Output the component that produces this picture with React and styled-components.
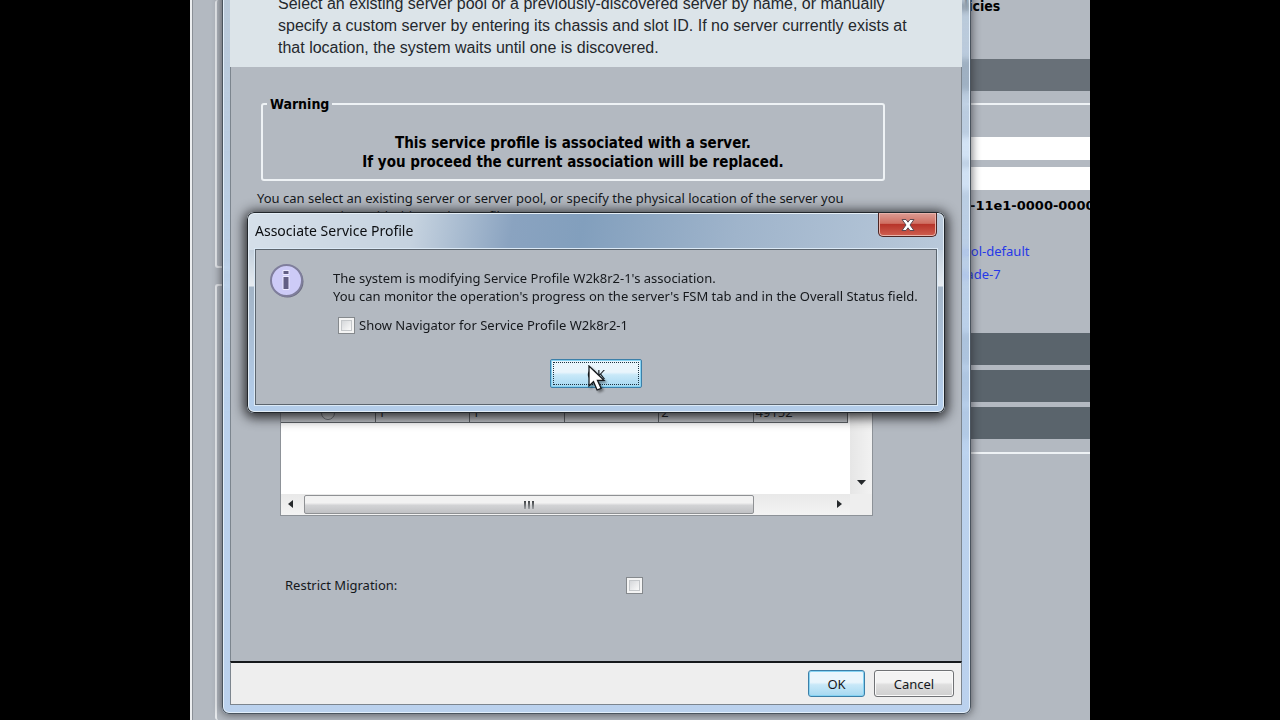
import React from "react";

import styled, { createGlobalStyle } from "styled-components";

const GlobalStyle = createGlobalStyle`
    * {
        box-sizing: border-box;
    }

    body {
        margin: 0;
        background: #000;
        color: #15181c;
        font-family: "Noto Sans", "Open Sans", sans-serif;
        font-size: 13px;
        line-height: 18px;
    }
`;

const Desktop = styled.main`
    position: relative;
    display: flex;
    height: 100vh;
    margin: 0 190px;
    overflow: hidden;
    background: #b3b9c1;
    border-left: 2px solid #eceef0;
`;

const TreePane = styled.div`
    display: flex;
    flex-direction: column;
    flex: 0 0 50px;
    gap: 16px;
    padding-left: 22px;
    border-left: 1px solid #8b9097;
`;

const TreeGroup = styled.div`
    flex: ${(props) => (props.$fill ? "1" : "0 0 268px")};
    border: 2px solid #e8ebee;
    border-radius: 3px;
    border-right: 0;
    border-top-width: ${(props) => (props.$fill ? "2px" : "0")};
    border-bottom-width: ${(props) => (props.$fill ? "0" : "2px")};
`;

const DetailPane = styled.div`
    display: flex;
    flex-direction: column;
    flex: 1;
    padding-left: 690px;
`;

const TabName = styled.div`
    height: 59px;
    padding-left: 14px;
    font-family: "DejaVu Sans Condensed", sans-serif;
    font-size: 14px;
    font-weight: bold;
    line-height: 13px;
    color: #000;
`;

const SectionBar = styled.div`
    height: 32px;
    margin-bottom: ${(props) => (props.$last ? "0" : "5px")};
    background: ${(props) => props.$tone || "#5a646c"};
`;

const Properties = styled.div`
    display: flex;
    flex-direction: column;
    gap: 7px;
    height: 230px;
    margin-top: 12px;
    padding-top: 32px;
    border-top: 2px solid #eef2f5;
`;

const Field = styled.input`
    display: block;
    width: 100%;
    height: 23px;
    padding: 0;
    border: 0;
    background: #fff;
`;

const Uuid = styled.div`
    padding-left: 38px;
    font-family: "DejaVu Sans", sans-serif;
    font-weight: bold;
    white-space: nowrap;
    color: #000;
`;

const Links = styled.div`
    display: flex;
    flex-direction: column;
    align-items: flex-start;
    gap: 5px;
    padding: 20px 0 0 23px;
`;

const Link = styled.a`
    text-decoration: none;
    color: #2638e8;
`;

const Divider = styled.div`
    margin-top: 13px;
    border-top: 2px solid #eef2f5;
`;

const Window = styled.section`
    position: absolute;
    top: -24px;
    bottom: 6px;
    left: 30px;
    right: 119px;
    display: flex;
    flex-direction: column;
    padding: 8px 9px 9px 8px;
    border-radius: 7px;
    background: linear-gradient(
        rgba(193, 215, 236, 0.55),
        rgba(187, 212, 242, 0.9) 60%
    );
    backdrop-filter: blur(3px);
    box-shadow:
        inset 0 0 0 1px #4a545e,
        inset 0 0 0 2px #e2eefa,
        0 0 9px 1px rgba(40, 40, 44, 0.65);
`;

const Header = styled.header`
    padding: 9px 20px 8px 48px;
    background: #dce4e9;
    font-family: "Liberation Sans", Arial, sans-serif;
    font-size: 16px;
    line-height: 22px;
    white-space: nowrap;
    color: #24282d;
`;

const Body = styled.div`
    display: flex;
    flex-direction: column;
    flex: 1;
    padding: 28px 77px 0 27px;
    background: #b3b9c1;
    box-shadow: inset 1px 0 #7c858e, inset -1px 0 #7c858e;
`;

const Warning = styled.fieldset`
    margin: 0 0 8px 4px;
    padding: 21px 0 7px;
    border: 2px solid #eef2f5;
    border-radius: 3px;
    font-family: "DejaVu Sans Condensed", sans-serif;
    font-weight: bold;
    color: #000;
`;

const WarningTitle = styled.legend`
    margin-left: 4px;
    padding: 0 3px;
    font-size: 14px;
`;

const WarningText = styled.p`
    margin: 0;
    font-size: 15px;
    line-height: 19px;
    text-align: center;
`;

const Hint = styled.p`
    margin: 0;
    white-space: nowrap;
`;

const ServerList = styled.div`
    display: grid;
    grid-template-columns: 1fr 22px;
    grid-template-rows: 92px 21px;
    width: 593px;
    margin: 176px 0 0 23px;
    border: 1px solid #8d9298;
    background: #eee;
`;

const TableArea = styled.div`
    background: #fff;
`;

const Table = styled.table`
    width: 567px;
    border-collapse: collapse;
    table-layout: fixed;
    background: #c8cbcf;
`;

const Cell = styled.td`
    height: 20px;
    padding: 0 2px;
    border-right: 1px solid #5e6266;
    border-bottom: 1px solid #5e6266;
    line-height: 18px;
    text-align: ${(props) => (props.$center ? "center" : "left")};
`;

const Radio = styled.input`
    appearance: none;
    width: 14px;
    height: 14px;
    margin: 0;
    border: 1px solid #70757a;
    border-radius: 50%;
    background: #d5d7d9;
    vertical-align: middle;
`;

const VerticalTrack = styled.div`
    display: flex;
    align-items: flex-end;
    justify-content: center;
    padding-bottom: 7px;
    background: linear-gradient(90deg, #e6e6e6, #f2f2f2);
`;

const HorizontalTrack = styled.div`
    display: flex;
    align-items: center;
    padding: 0 6px;
    background: linear-gradient(#e9e9e9, #f3f3f3);
`;

const Thumb = styled.div`
    display: flex;
    align-items: center;
    justify-content: center;
    gap: 2px;
    width: 450px;
    height: 19px;
    margin: 0 auto 0 8px;
    border: 1px solid #8f9194;
    border-radius: 2px;
    background: linear-gradient(#f2f2f2 40%, #d2d3d5 55%, #c0c1c4);
`;

const Grip = styled.span`
    width: 2px;
    height: 8px;
    background: linear-gradient(#3d4043, #9fa2a5);
`;

const Migration = styled.label`
    display: flex;
    align-items: center;
    margin: 60px 0 0 28px;
`;

const MigrationText = styled.span`
    width: 341px;
`;

const CheckBox = styled.input`
    appearance: none;
    flex: none;
    width: 17px;
    height: 17px;
    margin: 0;
    border: 1px solid #85898d;
    background: linear-gradient(135deg, #c9ccd0, #fafafa 80%);
    box-shadow: inset 0 0 0 2px #f4f4f4, inset 0 0 0 3px #c4c7ca;
`;

const Footer = styled.footer`
    display: flex;
    align-items: center;
    justify-content: flex-end;
    gap: 9px;
    height: 44px;
    padding: 0 7px;
    border: 1px solid #7c858e;
    border-top: 2px solid #15181b;
    background: #eee;
`;

const Button = styled.button`
    width: ${(props) => props.$width};
    height: 27px;
    padding: 0;
    border: 1px solid ${(props) => (props.$primary ? "#3c7fa8" : "#707275")};
    border-radius: 3px;
    background: ${(props) =>
        props.$primary
            ? "linear-gradient(#e9f5fc 45%, #c8e8f8 55%, #a6d8f1)"
            : "linear-gradient(#f3f3f3 45%, #dedede 55%, #cfcfcf)"};
    box-shadow: inset 0 0 0 1px
        ${(props) => (props.$primary ? "#86d3f3" : "#fafafa")};
    font-family: inherit;
    font-size: 13px;
    color: #15181c;
`;

const Dialog = styled.section`
    position: absolute;
    top: 212px;
    left: 55px;
    right: 145px;
    display: flex;
    flex-direction: column;
    padding: 0 8px 8px;
    border-radius: 7px;
    background:
        linear-gradient(
                100deg,
                #d6e0ea,
                #c5d2df 24%,
                #8aa3c0 38%,
                #829fbd 48%,
                #9fb4cb 70%,
                #b9c9da
            )
            top / 100% 38px no-repeat,
        linear-gradient(#c3d0dd 38px, #e6ebf0 74px, #a3b4c6 75px, #b4cdea 190px);
    box-shadow:
        inset 0 0 0 1px #22272c,
        inset 0 0 0 2px #e4eef6,
        0 2px 12px 3px rgba(20, 20, 22, 0.85);
`;

const TitleBar = styled.header`
    display: flex;
    align-items: center;
    justify-content: space-between;
    height: 37px;
`;

const Title = styled.h1`
    margin: 0;
    font-size: 14px;
    font-weight: normal;
    line-height: 18px;
    color: #0c0e11;
`;

const CloseButton = styled.button`
    display: flex;
    align-items: center;
    align-self: flex-start;
    justify-content: center;
    width: 59px;
    height: 24px;
    margin-top: 1px;
    padding: 0;
    border: 1px solid #4d2523;
    border-top: 0;
    border-radius: 0 0 5px 5px;
    background: linear-gradient(#dc9d94, #cf6f62 45%, #b7352a 50%, #cf5f50);
    box-shadow: inset 0 0 0 1px #e9b3aa;
`;

const DialogBody = styled.div`
    display: flex;
    flex-direction: column;
    justify-content: space-between;
    height: 156px;
    padding: 13px 13px 16px;
    border: 1px solid #5c656e;
    background: #b3b9c1;
    box-shadow: 0 0 0 1px #dbe9f6;
`;

const MessageRow = styled.div`
    display: flex;
    align-items: flex-start;
    gap: 28px;
`;

const Message = styled.div`
    padding-top: 6px;
    white-space: nowrap;
`;

const NavigatorOption = styled.label`
    display: flex;
    align-items: center;
    gap: 4px;
    margin: 11px 0 0 5px;
`;

const DialogActions = styled.div`
    display: flex;
    justify-content: center;
`;

const FocusButton = styled(Button)`
    height: 29px;
    border-radius: 2px;
    outline: 1px dotted #1b3340;
    outline-offset: -4px;
`;

const Pointer = styled.svg`
    position: absolute;
    top: 365px;
    left: 396px;
    filter: drop-shadow(2px 2px 1px rgba(0, 0, 0, 0.4));
`;

const Arrow = ({ direction }) => {
    const points = {
        left: "6,0 6,8 1,4",
        right: "2,0 2,8 7,4",
        down: "0,2 9,2 4.5,7",
    };

    return (
        <svg width="9" height="9" viewBox="0 0 9 9" aria-hidden="true">
            <polygon points={points[direction]} fill="#26292c" />
        </svg>
    );
};

const InfoIcon = () => (
    <svg width="36" height="36" viewBox="0 0 36 36" aria-hidden="true">
        <circle cx="18.500" cy="18.500" r="16" fill="#6c6c80" />
        <circle cx="17.500" cy="17.500" r="15.500" fill="#cdcbf7" stroke="#7f7e9c" strokeWidth="2" />
        <path
            d="M14 7.500h6v4h-6zM14 13.500h6v13h-6z"
            fill="#625f85"
            stroke="#ebe9ff"
            strokeWidth="1"
        />
    </svg>
);

const CloseIcon = () => (
    <svg width="16" height="14" viewBox="0 0 16 14" aria-hidden="true">
        <path
            d="M2 1.500h4l2 2.700 2-2.700h4l-4 5.500 4 5.500h-4l-2-2.700-2 2.700h-4l4-5.500z"
            fill="#fff"
            stroke="#5c4a52"
            strokeWidth="1"
        />
    </svg>
);

const ServerWindow = () => (
    <Window>
        <Header>
            Select an existing server pool or a previously-discovered server by
            name, or manually
            <br />
            specify a custom server by entering its chassis and slot ID. If no
            server currently exists at
            <br />
            that location, the system waits until one is discovered.
        </Header>
        <Body>
            <Warning>
                <WarningTitle>Warning</WarningTitle>
                <WarningText>
                    This service profile is associated with a server.
                    <br />
                    If you proceed the current association will be replaced.
                </WarningText>
            </Warning>
            <Hint>
                You can select an existing server or server pool, or specify the
                physical location of the server you
                <br />
                want to associate with this service profile.
            </Hint>
            <ServerList>
                <TableArea>
                    <Table>
                        <tbody>
                            <tr>
                                <Cell $center>
                                    <Radio type="radio" aria-label="Select server" />
                                </Cell>
                                <Cell>1</Cell>
                                <Cell>1</Cell>
                                <Cell />
                                <Cell>2</Cell>
                                <Cell>49152</Cell>
                            </tr>
                        </tbody>
                    </Table>
                </TableArea>
                <VerticalTrack>
                    <Arrow direction="down" />
                </VerticalTrack>
                <HorizontalTrack>
                    <Arrow direction="left" />
                    <Thumb>
                        <Grip />
                        <Grip />
                        <Grip />
                    </Thumb>
                    <Arrow direction="right" />
                </HorizontalTrack>
            </ServerList>
            <Migration>
                <MigrationText>Restrict Migration:</MigrationText>
                <CheckBox type="checkbox" />
            </Migration>
        </Body>
        <Footer>
            <Button $primary $width="57px">
                OK
            </Button>
            <Button $width="80px">Cancel</Button>
        </Footer>
    </Window>
);

const AssociateDialog = () => (
    <Dialog role="dialog" aria-labelledby="dialog-title">
        <TitleBar>
            <Title id="dialog-title">Associate Service Profile</Title>
            <CloseButton aria-label="Close">
                <CloseIcon />
            </CloseButton>
        </TitleBar>
        <DialogBody>
            <MessageRow>
                <InfoIcon />
                <Message>
                    The system is modifying Service Profile W2k8r2-1's
                    association.
                    <br />
                    You can monitor the operation's progress on the server's FSM
                    tab and in the Overall Status field.
                    <NavigatorOption>
                        <CheckBox type="checkbox" />
                        Show Navigator for Service Profile W2k8r2-1
                    </NavigatorOption>
                </Message>
            </MessageRow>
            <DialogActions>
                <FocusButton $primary $width="92px">
                    OK
                </FocusButton>
            </DialogActions>
        </DialogBody>
    </Dialog>
);

const App = () => (
    <>
        <GlobalStyle />
        <Desktop>
            <TreePane>
                <TreeGroup />
                <TreeGroup $fill />
            </TreePane>
            <DetailPane>
                <TabName>Policies</TabName>
                <SectionBar $last $tone="#687078" />
                <Properties>
                    <Field aria-label="Name" />
                    <Field aria-label="Description" />
                    <Uuid>-11e1-0000-0000</Uuid>
                    <Links>
                        <Link href="#pool">pool-default</Link>
                        <Link href="#blade">blade-7</Link>
                    </Links>
                </Properties>
                <SectionBar />
                <SectionBar />
                <SectionBar $last />
                <Divider />
            </DetailPane>
            <ServerWindow />
            <AssociateDialog />
            <Pointer width="18" height="28" viewBox="0 0 18 28" aria-hidden="true">
                <path
                    d="M1 1v20l4.500-4.300 3.600 8.300 4-1.700-3.600-8h6.500z"
                    fill="#fff"
                    stroke="#15181b"
                    strokeWidth="1.300"
                />
            </Pointer>
        </Desktop>
    </>
);

export default App;
